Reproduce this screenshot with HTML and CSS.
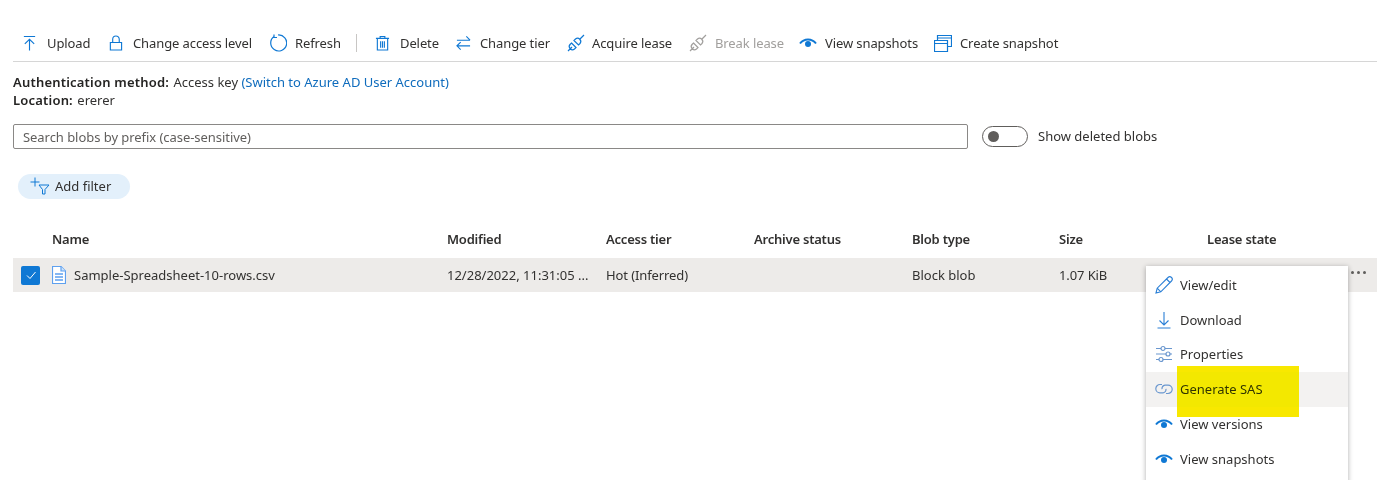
FILE: index.html
```html
<!DOCTYPE html>
<html lang="en">
<head>
<meta charset="utf-8">
<title>Blobs</title>
<link rel="stylesheet" href="styles.css">
</head>
<body>
<div class="page">
  <div class="toolbar">
    <div class="tool w-upload"><svg class="ic" viewBox="0 0 16 16"><path d="M2 1h12M8 16V4M3 9l5-5 5 5"/></svg><span>Upload</span></div>
    <div class="tool w-access"><svg class="ic" viewBox="0 0 16 16"><path d="M2.500 7.500h12v8h-12zM5 7.500V4a3.500 3.500 0 0 1 7 0v3.500"/></svg><span>Change access level</span></div>
    <div class="tool w-refresh"><svg class="ic ic-lg" viewBox="0 0 18 18"><path d="M5 2.500A8 8 0 1 0 9 1M5 0.500v3h3"/></svg><span>Refresh</span></div>
    <div class="sep"></div>
    <div class="tool w-delete"><svg class="ic" viewBox="0 0 16 16"><path d="M1 3h14M5.500 3V1h5v2M2.500 3v12.500h11V3M6 6v7M8 6v7M10 6v7"/></svg><span>Delete</span></div>
    <div class="tool w-tier"><svg class="ic" viewBox="0 0 16 16"><path d="M1 5h14M11 1l4 4M1 11h14M5 7l-4 4 4 4"/></svg><span>Change tier</span></div>
    <div class="tool w-lease"><svg class="ic ic-lg" viewBox="0 0 18 18"><path d="M1 17l4-4M17 1l-4 4M7 6.500l4.500 4.500 1.500-1.500a3.200 3.200 0 0 0-4.500-4.500zM4.500 9l4.500 4.500-1.500 1.500a3.200 3.200 0 0 1-4.500-4.500z"/></svg><span>Acquire lease</span></div>
    <div class="tool w-break off"><svg class="ic ic-lg" viewBox="0 0 18 18"><path d="M1 17l4-4M17 1l-4 4M7 6.500l4.500 4.500 1.500-1.500a3.200 3.200 0 0 0-4.500-4.500zM4.500 9l4.500 4.500-1.500 1.500a3.200 3.200 0 0 1-4.500-4.500z"/></svg><span>Break lease</span></div>
    <div class="tool w-view"><svg class="ic ic-lg eye" viewBox="0 0 18 12"><path class="eye-arc" d="M1 6.500C5 1 13 1 17 6.500"/><circle cx="9" cy="7" r="3"/></svg><span>View snapshots</span></div>
    <div class="tool w-create"><svg class="ic ic-lg" viewBox="0 0 18 18"><path d="M0.500 6.500h13v11H0.500zM0.500 9.500h13M3.500 6.500v-5h14v11h-4M3.500 4h14"/></svg><span>Create snapshot</span></div>
  </div>

  <div class="info">
    <div><b>Authentication method:</b> Access key <a class="link">(Switch to Azure AD User Account)</a></div>
    <div><b>Location:</b> ererer</div>
  </div>

  <div class="search-row">
    <div class="search">Search blobs by prefix (case-sensitive)</div>
    <div class="toggle"><i class="knob"></i></div>
    <span>Show deleted blobs</span>
  </div>

  <div class="filter">
    <svg class="filter-ic" viewBox="0 0 20 18"><path d="M0.500 5h9M5 0.500v9M9 8h10l-4 4.500V17h-2.500v-4.500z"/></svg>
    <span>Add filter</span>
  </div>

  <div class="grid head">
    <span></span><span>Name</span><span>Modified</span><span>Access tier</span><span>Archive status</span><span>Blob type</span><span>Size</span><span>Lease state</span>
  </div>
  <div class="grid row">
    <span class="check"><svg viewBox="0 0 12 12"><path d="M2 6.500l3 3 5.500-6.500"/></svg></span>
    <span class="file"><svg class="doc" viewBox="0 0 14 18"><path class="doc-body" d="M0.500 0.500h8.500l4.500 4.500v12.500H0.500z"/><path class="doc-fold" d="M9 0.500V5h4.500"/><path class="doc-lines" d="M3 8h8M3 11h8M3 14h8"/></svg>Sample-Spreadsheet-10-rows.csv</span>
    <span>12/28/2022, 11:31:05 ...</span><span class="tight">Hot (Inferred)</span><span></span><span>Block blob</span><span class="tight">1.07 KiB</span><span></span>
    <span class="more"><i></i><i></i><i></i></span>
  </div>

  <div class="menu">
    <div class="item"><svg class="mi" viewBox="0 0 18 18"><path d="M1 17l1.200-4.800L13 1.500a2 2 0 0 1 3.500 3.500L5.800 15.800zM2.200 12.200l3.600 3.600M11.500 3l3.500 3.500"/></svg>View/edit</div>
    <div class="item"><svg class="mi" viewBox="0 0 18 18"><path d="M2.500 17h13M9 1v13M4.500 9.500L9 14l4.500-4.500"/></svg>Download</div>
    <div class="item"><svg class="mi mi-soft" viewBox="0 0 18 18"><path d="M1 3.500h5M10 3.500h7M1 9h10M15 9h2M1 14.500h3M8 14.500h9"/><circle cx="8" cy="3.500" r="2"/><circle cx="13" cy="9" r="2"/><circle cx="6" cy="14.500" r="2"/></svg>Properties</div>
    <div class="item hover"><svg class="mi mi-soft mi-link" viewBox="0 0 18 12"><path d="M7 1.500H5a4.200 4.200 0 0 0 0 8.400h3a3.800 3.800 0 0 0 3-4M11 10.500h2a4.200 4.200 0 0 0 0-8.400h-3a3.800 3.800 0 0 0-3 4"/></svg>Generate SAS</div>
    <div class="item"><svg class="mi eye" viewBox="0 0 18 12"><path class="eye-arc" d="M1 6.500C5 1 13 1 17 6.500"/><circle cx="9" cy="7" r="3"/></svg>View versions</div>
    <div class="item"><svg class="mi eye" viewBox="0 0 18 12"><path class="eye-arc" d="M1 6.500C5 1 13 1 17 6.500"/><circle cx="9" cy="7" r="3"/></svg>View snapshots</div>
  </div>
  <div class="marker"></div>
</div>
</body>
</html>
```
FILE: styles.css
```css
* { box-sizing: border-box; }
html, body { margin: 0; height: 480px; overflow: hidden; background: #fff; }
body { font: 13px/18px "Noto Sans", "Liberation Sans", sans-serif; color: #323130; }
.page { position: relative; width: 1386px; height: 480px; overflow: hidden; padding: 24px 9px 0 13px; }

svg { display: block; flex: none; }
.toolbar { display: flex; align-items: center; height: 38px; border-bottom: 1px solid #d6d6d6; padding-left: 9px; }
.tool { display: flex; align-items: center; gap: 10px; flex: none; }
.tool span { letter-spacing: -0.1px; }
.ic { width: 15px; height: 16px; fill: none; stroke: #0f78d4; stroke-width: 1.200; }
.ic-lg { width: 18px; height: 18px; }
.ic.eye { height: 12px; }
.eye circle { fill: #0f78d4; stroke: none; }
.eye-arc { fill: none; stroke: #0f78d4; stroke-width: 2; }
.w-upload { width: 86px; }
.w-access { width: 161px; }
.w-refresh { width: 87px; gap: 8px; }
.w-delete { width: 81px; }
.w-tier { width: 111px; gap: 9px; }
.w-lease { width: 122px; gap: 7px; }
.w-break { width: 110px; gap: 8px; }
.w-view { width: 135px; gap: 8px; }
.w-create { gap: 8px; }
.sep { width: 1px; height: 18px; background: #c8c6c4; margin-right: 18px; flex: none; }
.off { color: #a19f9d; }
.off .ic { stroke: #a19f9d; }

.info { margin-top: 11px; line-height: 18px; }
.info b { font-weight: 600; letter-spacing: 0.2px; margin-right: 1px; color: #252423; }
.link { color: #0f6cbd; }

.search-row { display: flex; align-items: center; margin-top: 14px; height: 26px; }
.search { width: 955px; height: 25px; border: 1px solid #8a8886; border-radius: 2px; padding: 3px 9px; color: #605e5c; letter-spacing: -0.05px; }
.toggle { width: 46px; height: 21px; margin-left: 14px; margin-right: 10px; border: 1px solid #605e5c; border-radius: 11px; padding: 4px 5px; }
.knob { display: block; width: 11px; height: 11px; border-radius: 50%; background: #605e5c; }

.filter { display: flex; align-items: center; gap: 5px; width: 112px; height: 25px; margin: 25px 0 0 5px; padding: 0 0 2px 12px; border-radius: 13px; background: #e3f0fb; }
.filter-ic { width: 20px; height: 18px; fill: none; stroke: #0f78d4; stroke-width: 1; }

.grid { display: grid; grid-template-columns: 39px 395px 159px 148px 158px 147px 148px 1fr; align-items: center; width: 1364px; position: relative; }
.head { margin-top: 24px; height: 31px; font-weight: 600; letter-spacing: -0.22px; }
.row { height: 34px; background: #edebe9; margin-top: 4px; }
.tight { letter-spacing: -0.1px; }
.check { display: flex; align-items: center; justify-content: center; width: 19px; height: 19px; margin-left: 8px; border-radius: 2px; background: #0f78d4; }
.check svg { width: 12px; height: 12px; fill: none; stroke: #fff; stroke-width: 1; }
.file { display: flex; align-items: center; gap: 8px; white-space: nowrap; }
.doc { width: 14px; height: 18px; }
.doc-body { fill: #fff; stroke: #5ea0ef; stroke-width: 1.200; }
.doc-fold { fill: #cfe4fa; stroke: #5ea0ef; stroke-width: 1.200; }
.doc-lines { fill: none; stroke: #5ea0ef; stroke-width: 1.500; }
.more { position: absolute; right: 11px; top: 13px; display: flex; gap: 3px; }
.more i { width: 3px; height: 3px; border-radius: 50%; background: #605e5c; }

.menu { position: absolute; left: 1146px; top: 266px; width: 202px; height: 240px; padding-top: 1.400px; background: #fff; box-shadow: 0 1px 5px rgba(0,0,0,.32); }
.item { display: flex; align-items: center; gap: 7px; height: 34.800px; padding-left: 9px; }
.hover { background: #f3f2f1; }
.mi { width: 18px; height: 18px; fill: none; stroke: #2a7fd6; stroke-width: 1.100; }
.mi.eye, .mi-link { height: 12px; }
.mi-soft { stroke: #6a97cf; stroke-width: 1.200; }
.mi-soft circle { fill: #fff; }
.marker { position: absolute; left: 1177px; top: 366px; width: 122px; height: 51px; background: #f8e800; mix-blend-mode: darken; }
```
